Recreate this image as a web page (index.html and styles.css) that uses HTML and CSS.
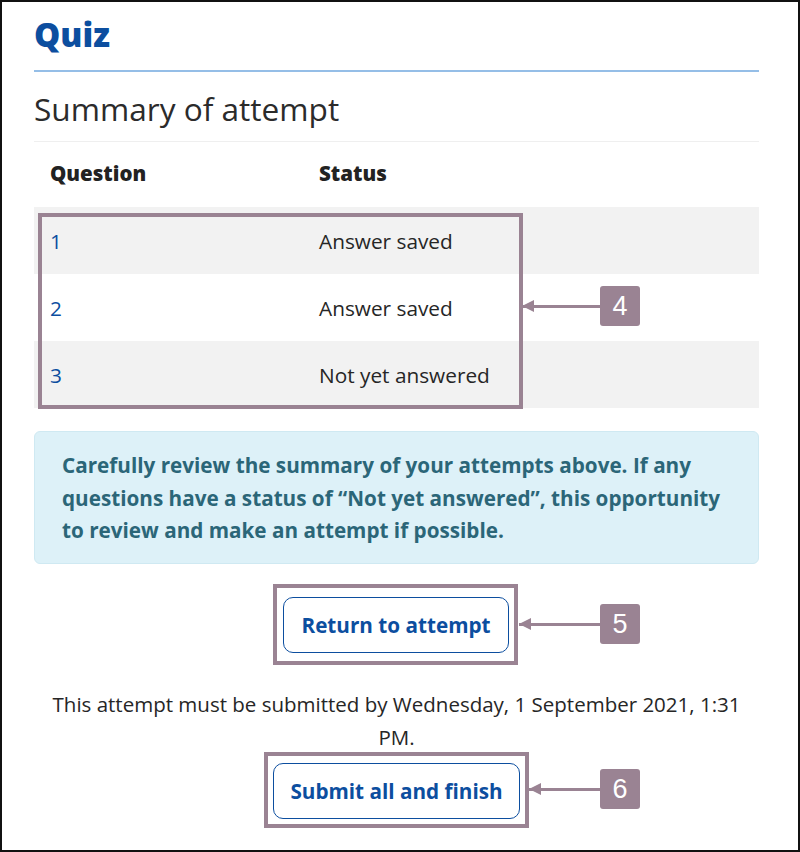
FILE: index.html
```html
<!DOCTYPE html>
<html lang="en">
<head>
<meta charset="utf-8">
<title>Quiz</title>
<link rel="stylesheet" href="styles.css">
</head>
<body>
<div class="frame">
  <div class="page">
    <h1 class="title">Quiz</h1>
    <h2 class="subtitle">Summary of attempt</h2>
    <div class="summary">
      <div class="row head">
        <div class="cell q">Question</div>
        <div class="cell s">Status</div>
      </div>
      <div class="row odd">
        <div class="cell q"><a href="#">1</a></div>
        <div class="cell s">Answer saved</div>
      </div>
      <div class="row even">
        <div class="cell q"><a href="#">2</a></div>
        <div class="cell s">Answer saved</div>
      </div>
      <div class="row odd">
        <div class="cell q"><a href="#">3</a></div>
        <div class="cell s">Not yet answered</div>
      </div>
    </div>
    <div class="alert">Carefully review the summary of your attempts above. If any questions have a status of “Not yet answered”, this opportunity to review and make an attempt if possible.</div>
    <div class="actions">
      <div class="mark-frame mark-return"><button class="btn">Return to attempt</button></div>
      <p class="due">This attempt must be submitted by Wednesday, 1 September 2021, 1:31 PM.</p>
      <div class="mark-frame mark-submit"><button class="btn">Submit all and finish</button></div>
    </div>
  </div>

  <div class="mark-box mark-table"></div>
  <div class="callout callout-4"><span class="arrow"></span><span class="badge">4</span></div>
  <div class="callout callout-5"><span class="arrow"></span><span class="badge">5</span></div>
  <div class="callout callout-6"><span class="arrow"></span><span class="badge">6</span></div>
</div>
</body>
</html>
```
FILE: styles.css
```css
* { box-sizing: border-box; }
html, body { margin: 0; padding: 0; background: #fff; }
body { font-family: "Open Sans", "Liberation Sans", sans-serif; color: #262626; }

.frame {
  position: relative;
  width: 800px;
  height: 852px;
  border: 2px solid #111;
  overflow: hidden;
}

.page {
  padding: 0 39px 0 32px;
}

.title {
  margin: 0;
  padding-top: 10px;
  height: 70px;
  font-size: 33px;
  line-height: 46px;
  font-weight: 800;
  color: #0c4e9f;
  border-bottom: 2px solid #95bee7;
}

.subtitle {
  margin: 0;
  height: 70px;
  padding-top: 17px;
  font-size: 31.6px;
  line-height: 40px;
  font-weight: 400;
  color: #2b2b2b;
  border-bottom: 1px solid #efefef;
}

.summary { display: flex; flex-direction: column; }
.row { display: flex; align-items: center; }
.row.head { height: 65px; padding-bottom: 4px; font-weight: 800; font-size: 20.5px; color: #222; }
.row.odd, .row.even { height: 67px; font-size: 20.8px; }
.row.odd { background: #f2f2f2; }
.row.even { background: #fff; }
.cell.q { width: 285px; padding-left: 16px; }
.cell.s { flex: 1; }
.cell a { color: #0c4e9f; text-decoration: none; }

.alert {
  margin-top: 23px;
  height: 133px;
  padding: 17px 20px 0 27px;
  background: #ddf1f8;
  border: 1px solid #cfe9f2;
  border-radius: 6px;
  color: #2b6678;
  font-weight: 700;
  font-size: 20.7px;
  line-height: 32.5px;
}

.actions { display: flex; flex-direction: column; align-items: center; }

.mark-frame { border: 4px solid #9a8393; display: inline-flex; }
.mark-return { margin-top: 20px; padding: 9px 5px 8px 6px; margin-left: -2px; }
.mark-submit { margin-top: -2px; padding: 7px 5px 5px 5px; margin-left: 0; }

.btn {
  font-family: inherit;
  font-weight: 700;
  font-size: 20.7px;
  color: #0c4e9f;
  background: #fff;
  border: 1px solid #0c4e9f;
  border-radius: 10px;
  height: 56px;
  padding: 0 17px;
  cursor: pointer;
}
.mark-submit .btn { padding: 0 16px; }

.due {
  margin: 23px 0 0;
  width: 712px;
  text-align: center;
  font-size: 20.5px;
  line-height: 33px;
  color: #262626;
}

.mark-box {
  position: absolute;
  left: 36px;
  top: 211px;
  width: 485px;
  height: 196px;
  border: 4px solid #9a8393;
}

.callout {
  position: absolute;
  display: flex;
  align-items: center;
  height: 40px;
}
.callout .arrow {
  position: relative;
  height: 3px;
  background: #9a8393;
  flex: 1;
}
.callout .arrow::before {
  content: "";
  position: absolute;
  left: 0;
  top: -5px;
  border-top: 6.5px solid transparent;
  border-bottom: 6.5px solid transparent;
  border-right: 12px solid #9a8393;
}
.callout .badge {
  width: 40px;
  height: 40px;
  background: #9a8393;
  border-radius: 3px;
  color: #fff;
  font-family: "Liberation Sans", Arial, sans-serif;
  font-size: 27px;
  display: flex;
  align-items: center;
  justify-content: center;
}
.callout-4 { left: 520px; top: 284px; width: 118px; }
.callout-5 { left: 517px; top: 602px; width: 121px; }
.callout-6 { left: 527px; top: 767px; width: 111px; }
```
